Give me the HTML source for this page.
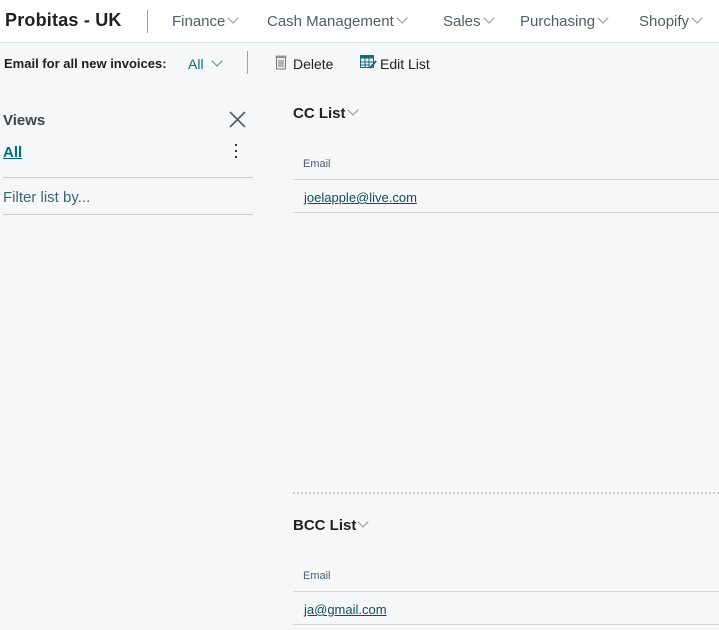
<!DOCTYPE html>
<html><head><style>
body{margin:0;width:719px;height:630px;overflow:hidden;background:#f6f7f9;font-family:"Liberation Sans",sans-serif;position:relative}
.a{position:absolute;white-space:nowrap}
.hdr{position:absolute;left:0;top:0;width:719px;height:42px;background:#fff;border-bottom:1px solid #e3e4e6}
.nav{color:#505c6d;font-size:15px;top:13px}
.chev{display:inline-block;width:7px;height:7px;border-right:1px solid #8a93a0;border-bottom:1px solid #8a93a0;transform:rotate(45deg);margin-left:4px;position:relative;top:-4px}
.line{position:absolute;height:1px;background:#c8cbd0}
</style></head><body>
<div class="hdr"></div>
<div class="a" style="left:5px;top:10px;font-size:18px;font-weight:bold;color:#212121;letter-spacing:0.2px">Probitas - UK</div>
<div style="position:absolute;left:147px;top:10px;width:1px;height:23px;background:#a0a0a0"></div>
<div class="a nav" style="left:172px">Finance<span class="chev"></span></div>
<div class="a nav" style="left:267px">Cash Management<span class="chev"></span></div>
<div class="a nav" style="left:443px">Sales<span class="chev"></span></div>
<div class="a nav" style="left:520px">Purchasing<span class="chev"></span></div>
<div class="a nav" style="left:639px">Shopify<span class="chev"></span></div>

<div class="a" style="left:4px;top:56px;font-size:13px;font-weight:bold;color:#212121">Email for all new invoices:</div>
<div class="a" style="left:188px;top:56px;font-size:14px;color:#00707a">All<span class="chev" style="border-color:#5a7d85;margin-left:9px"></span></div>
<div style="position:absolute;left:247px;top:51px;width:1px;height:23px;background:#a0a0a0"></div>
<svg class="a" style="left:275px;top:54px" width="12" height="16" viewBox="0 0 12 16"><rect x="1.5" y="3.5" width="9" height="11.5" fill="#eee" stroke="#7a7a7a"/><rect x="0.5" y="1.5" width="11" height="2" fill="#999"/><line x1="4" y1="6" x2="4" y2="13" stroke="#7a7a7a"/><line x1="6" y1="6" x2="6" y2="13" stroke="#7a7a7a"/><line x1="8" y1="6" x2="8" y2="13" stroke="#7a7a7a"/></svg>
<div class="a" style="left:293px;top:56px;font-size:14px;color:#212121">Delete</div>
<svg class="a" style="left:360px;top:55px" width="17" height="14" viewBox="0 0 17 14"><rect x="0.5" y="0.5" width="13" height="12" fill="none" stroke="#0f6b78"/><rect x="0.5" y="0.5" width="13" height="3" fill="#0f6b78"/><line x1="0" y1="7" x2="13" y2="7" stroke="#0f6b78"/><line x1="0" y1="10" x2="10" y2="10" stroke="#0f6b78"/><line x1="5" y1="3" x2="5" y2="13" stroke="#0f6b78"/><line x1="9" y1="3" x2="9" y2="13" stroke="#0f6b78"/><path d="M10 13 L16 6" stroke="#0f6b78" stroke-width="2"/></svg>
<div class="a" style="left:380px;top:56px;font-size:14px;color:#212121">Edit List</div>

<div class="a" style="left:3px;top:112px;font-size:15px;font-weight:bold;color:#3c4450">Views</div>
<svg class="a" style="left:229px;top:111px" width="17" height="17"><path d="M1 1L16 16M16 1L1 16" stroke="#505c6d" stroke-width="1.6"/></svg>
<div class="a" style="left:3px;top:144px;font-size:15px;font-weight:bold;color:#00707a;text-decoration:underline">All</div>
<div class="a" style="left:235px;top:144px;width:3px;font-size:0">
<div style="width:2px;height:2px;background:#333;margin-bottom:4px"></div><div style="width:2px;height:2px;background:#333;margin-bottom:4px"></div><div style="width:2px;height:2px;background:#333"></div></div>
<div class="line" style="left:3px;top:177px;width:250px"></div>
<div class="a" style="left:3px;top:189px;font-size:15px;color:#3e6470">Filter list by...</div>
<div class="line" style="left:3px;top:214px;width:250px"></div>

<div class="a" style="left:293px;top:105px;font-size:15px;font-weight:bold;color:#212121">CC List<span class="chev" style="margin-left:3px"></span></div>
<div class="a" style="left:303px;top:158px;font-size:11px;color:#505c6d">Email</div>
<div class="line" style="left:293px;top:179px;width:426px;background:#d3d6da"></div>
<div class="a" style="left:304px;top:190px;font-size:13px;color:#0f4f5a;text-decoration:underline">joelapple@live.com</div>
<div class="line" style="left:293px;top:212px;width:426px;background:#d3d6da"></div>

<div style="position:absolute;left:293px;top:492px;width:426px;border-top:2px dotted #c8cbd0"></div>

<div class="a" style="left:293px;top:517px;font-size:15px;font-weight:bold;color:#212121">BCC List<span class="chev" style="margin-left:3px"></span></div>
<div class="a" style="left:303px;top:570px;font-size:11px;color:#505c6d">Email</div>
<div class="line" style="left:293px;top:591px;width:426px;background:#d3d6da"></div>
<div class="a" style="left:304px;top:602px;font-size:13px;color:#0f4f5a;text-decoration:underline">ja@gmail.com</div>
<div class="line" style="left:293px;top:624px;width:426px;background:#d3d6da"></div>
</body></html>
